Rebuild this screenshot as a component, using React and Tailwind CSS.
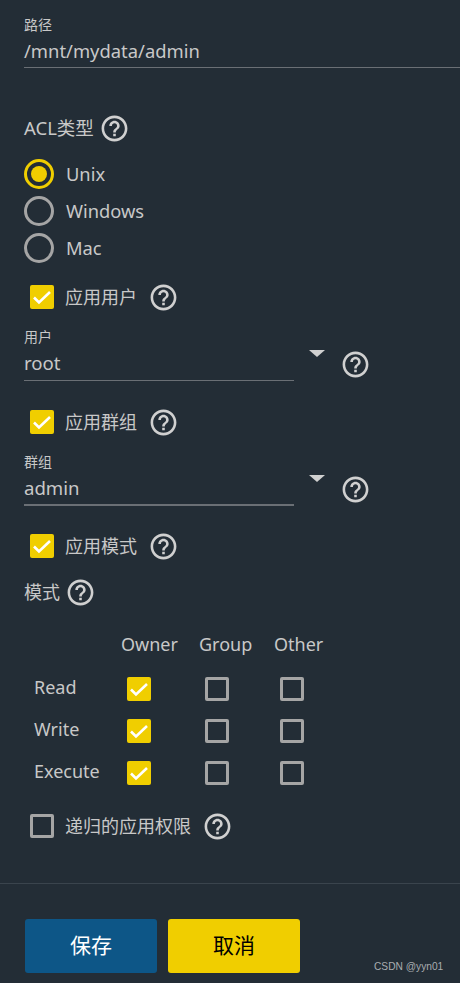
import React from 'react';

const HelpIcon = ({ className = '' }) => (
  <svg viewBox="0 0 24 24" className={`w-[31px] h-[31px] shrink-0 fill-[#d0d0d0] ${className}`}>
    <path d="M11 18h2v-2h-2v2zm1-16C6.48 2 2 6.48 2 12s4.48 10 10 10 10-4.48 10-10S17.52 2 12 2zm0 18c-4.41 0-8-3.59-8-8s3.59-8 8-8 8 3.59 8 8-3.59 8-8 8zm0-14c-2.21 0-4 1.79-4 4h2c0-1.1.9-2 2-2s2 .9 2 2c0 2-3 1.75-3 5h2c0-2.25 3-2.5 3-5 0-2.21-1.79-4-4-4z" />
  </svg>
);

const Checkbox = ({ checked }) =>
  checked ? (
    <span className="block w-6 h-6 shrink-0 rounded-[2px] bg-[#f0ce00]">
      <svg viewBox="0 0 24 24" className="w-6 h-6 fill-none stroke-white stroke-[2.6]">
        <path d="M4 12.5l5 5L20 7" />
      </svg>
    </span>
  ) : (
    <span className="block w-6 h-6 shrink-0 rounded-[2px] border-[3px] border-[#a5a5a5]" />
  );

const Radio = ({ checked, label }) => (
  <div className="flex items-center h-[37px]">
    {checked ? (
      <span className="flex items-center justify-center w-[30px] h-[30px] rounded-full border-[3px] border-[#f0ce00]">
        <span className="block w-4 h-4 rounded-full bg-[#f0ce00]" />
      </span>
    ) : (
      <span className="block w-[30px] h-[30px] rounded-full border-[3px] border-[#a5a5a5]" />
    )}
    <span className="ml-[12px] text-[18.3px] text-[#c8c8c8]">{label}</span>
  </div>
);

const CheckRow = ({ label, checked = true, className = '' }) => (
  <div className={`flex items-center h-[32px] pl-[30px] ${className}`}>
    <Checkbox checked={checked} />
    <span className="ml-[11px] text-[18px] text-[#c8c8c8]">{label}</span>
    <HelpIcon className="ml-[11px]" />
  </div>
);

const SelectField = ({ label, value, thick, className = '' }) => (
  <div className={`flex pl-6 ${className}`}>
    <div className="w-[270px]">
      <div className="h-[16px] leading-[16px] text-[14px] text-[#c8c8c8]">{label}</div>
      <div className={`h-[36px] leading-[36px] text-[18.6px] text-[#c8c8c8] border-b-[#6a6f75] ${thick ? 'border-b-2' : 'border-b'}`}>{value}</div>
    </div>
    <div className="ml-[15px] mt-[21px] w-0 h-0 border-x-[8px] border-x-transparent border-t-[7px] border-t-[#d0d0d0]" />
    <HelpIcon className="ml-[15px] mt-[20px]" />
  </div>
);

const rows = [
  ['Read', true],
  ['Write', true],
  ['Execute', true],
];

const App = () => {
  return (
    <div className="w-[460px] h-[983px] overflow-hidden relative bg-[#232d36] font-['Noto_Sans','Noto_Sans_CJK_SC',sans-serif]">
      <div className="pt-[17px]">
        <div className="pl-6">
          <div className="h-[16px] leading-[16px] text-[14px] text-[#c8c8c8]">路径</div>
          <div className="h-[35px] leading-[36px] text-[18.4px] text-[#c8c8c8] border-b border-b-[#6a6f75]">/mnt/mydata/admin</div>
        </div>

        <div className="flex items-center pl-6 mt-[44px] h-[32px]">
          <span className="text-[18.5px] text-[#c8c8c8]">ACL类型</span>
          <HelpIcon className="ml-[5px]" />
        </div>

        <div className="pl-6 mt-[11px]">
          <Radio checked label="Unix" />
          <Radio label="Windows" />
          <Radio label="Mac" />
        </div>

        <CheckRow label="应用用户" className="mt-[15px]" />
        <SelectField label="用户" value="root" className="mt-[16px]" />
        <CheckRow label="应用群组" className="mt-[25px]" />
        <SelectField label="群组" value="admin" thick className="mt-[16px]" />
        <CheckRow label="应用模式" className="mt-[24px]" />

        <div className="flex items-center pl-6 mt-[14px] h-[32px]">
          <span className="text-[18px] text-[#c8c8c8]">模式</span>
          <HelpIcon className="ml-[5px]" />
        </div>

        <div className="grid grid-cols-[66px_57px_54px_50px] gap-x-[21px] pl-[34px] mt-[18px] text-[18px] text-[#c8c8c8]">
          <div className="h-[42px]" />
          <div className="h-[42px] leading-[36px]">Owner</div>
          <div className="h-[42px] leading-[36px]">Group</div>
          <div className="h-[42px] leading-[36px]">Other</div>
          {rows.map(([name, owner]) => (
            <React.Fragment key={name}>
              <div className="h-[42px] leading-[38px]">{name}</div>
              <div className="h-[42px] pl-[6px] pt-[9px]"><Checkbox checked={owner} /></div>
              <div className="h-[42px] pl-[6px] pt-[9px]"><Checkbox /></div>
              <div className="h-[42px] pl-[6px] pt-[9px]"><Checkbox /></div>
            </React.Fragment>
          ))}
        </div>

        <CheckRow label="递归的应用权限" checked={false} className="mt-[16px]" />

        <div className="mt-[41px] border-t border-t-[#3a444d]" />

        <div className="flex gap-[11px] pl-[25px] mt-[35px]">
          <button className="w-[132px] h-[54px] rounded-[3px] bg-[#0d5687] text-[21px] text-white">保存</button>
          <button className="w-[132px] h-[54px] rounded-[3px] bg-[#f0ce00] text-[21px] text-black">取消</button>
        </div>
      </div>
      <span className="absolute left-[374px] top-[960px] text-[10.2px] leading-[14px] text-[#a8acb0] font-['Liberation_Sans',sans-serif]">CSDN @yyn01</span>
    </div>
  );
};

export default App;
